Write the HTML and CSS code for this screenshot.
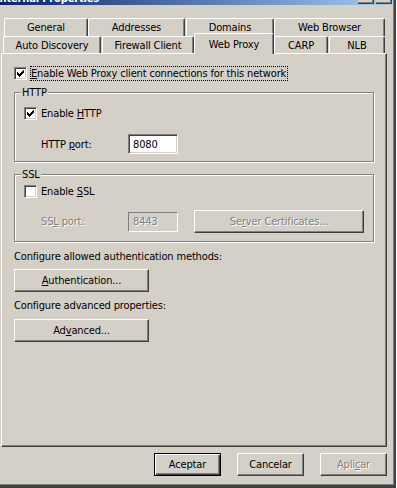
FILE: index.html
```html
<!DOCTYPE html>
<html lang="en">
<head>
  <meta charset="UTF-8" />
  <title>Internal Properties</title>
  <link rel="stylesheet" href="styles.css">
</head>
<body>
  <div class="window">
    <div class="titlebar">
      <div class="title">Internal Properties</div>
      <div class="title-btns">
        <span class="title-btn">?</span>
        <span class="title-btn">x</span>
      </div>
    </div>

    <div class="tabs">
      <div class="tab-row back">
        <div class="tab" style="width:84px">General</div>
        <div class="tab" style="width:97px">Addresses</div>
        <div class="tab gap" style="width:88px">Domains</div>
        <div class="tab" style="width:111px">Web Browser</div>
      </div>
      <div class="tab-row front">
        <div class="tab" style="width:98px">Auto Discovery</div>
        <div class="tab gap" style="width:92px">Firewall Client</div>
        <div class="tab selected" style="width:80px">Web Proxy</div>
        <div class="tab" style="width:54px">CARP</div>
        <div class="tab gap" style="width:56px">NLB</div>
      </div>
    </div>

    <div class="panel">
      <div class="check-row">
        <span class="check on"><svg width="7" height="7" viewBox="0 0 7 7"><path d="M6 0h1v1h-1zM5 1h2v1h-2zM0 2h1v1h-1zM4 2h3v1h-3zM0 3h2v1h-2zM3 3h3v1h-3zM0 4h5v1h-5zM1 5h3v1h-3zM2 6h1v1h-1z" fill="#000"/></svg></span>
        <span class="check-label focus"><u>E</u>nable Web Proxy client connections for this network</span>
      </div>

      <fieldset class="group http">
        <legend>HTTP</legend>
        <div class="check-row">
          <span class="check on"><svg width="7" height="7" viewBox="0 0 7 7"><path d="M6 0h1v1h-1zM5 1h2v1h-2zM0 2h1v1h-1zM4 2h3v1h-3zM0 3h2v1h-2zM3 3h3v1h-3zM0 4h5v1h-5zM1 5h3v1h-3zM2 6h1v1h-1z" fill="#000"/></svg></span>
          <span class="check-label">Enable <u>H</u>TTP</span>
        </div>
        <div class="field-row port-row">
          <span class="field-label">HTTP <u>p</u>ort:</span>
          <span class="input">8080</span>
        </div>
      </fieldset>

      <fieldset class="group ssl">
        <legend>SSL</legend>
        <div class="check-row">
          <span class="check"></span>
          <span class="check-label">Enable <u>S</u>SL</span>
        </div>
        <div class="field-row ssl-row">
          <span class="field-label disabled">SS<u>L</u> port:</span>
          <span class="input disabled">8443</span>
          <span class="btn disabled cert-btn">Se<u>r</u>ver Certificates...</span>
        </div>
      </fieldset>

      <div class="caption">Configure allowed authentication methods:</div>
      <div class="btn wide"><u>A</u>uthentication...</div>
      <div class="caption second">Configure advanced properties:</div>
      <div class="btn wide">Ad<u>v</u>anced...</div>
    </div>

    <div class="footer">
      <div class="btn default">Aceptar</div>
      <div class="btn">Cancelar</div>
      <div class="btn disabled">Apli<u>c</u>ar</div>
    </div>
  </div>
</body>
</html>
```

FILE: styles.css
```css
body {
  margin: 0;
  background: #fff;
  font-family: 'DejaVu Sans Condensed', 'DejaVu Sans', sans-serif;
  font-size: 11px;
  line-height: 13px;
  letter-spacing: -0.15px;
  color: #000;
  overflow: hidden;
}
u {
  text-underline-offset: 1px;
}
.window {
  width: 394px;
  height: 485px;
  background: #d4d0c8;
  border-right: 2px solid #404040;
  border-bottom: 3px solid #404040;
  box-shadow: inset -1px -1px 0 #808080;
}
.titlebar {
  height: 5px;
  overflow: hidden;
  display: flex;
  justify-content: space-between;
  background: linear-gradient(to right, #0a246a, #a6caf0);
  margin-right: 1px;
}
.title {
  color: #fff;
  font-weight: bold;
  margin-top: -8px;
  margin-left: -4px;
}
.title-btns {
  display: flex;
  gap: 2px;
  margin-top: -12px;
  margin-right: 1px;
}
.title-btn {
  width: 15px;
  height: 15px;
  background: #d4d0c8;
  border-right: 1px solid #404040;
  border-bottom: 1px solid #404040;
  box-shadow: inset -1px -1px 0 #808080;
  font-weight: bold;
  text-align: center;
  line-height: 15px;
}
.tabs {
  margin-top: 13px;
}
.tab-row {
  display: flex;
  align-items: flex-end;
}
.tab-row.back {
  height: 18px;
  padding-left: 4px;
}
.tab-row.front {
  height: 17px;
  padding-left: 3px;
}
.tab {
  box-sizing: border-box;
  height: 100%;
  background: #d4d0c8;
  border-top: 1px solid #fff;
  border-left: 1px solid #fff;
  border-right: 1px solid #404040;
  border-radius: 2px 2px 0 0;
  box-shadow: inset -1px 0 0 #808080;
  display: flex;
  align-items: center;
  justify-content: center;
  white-space: nowrap;
}
.tab.gap {
  margin-left: 1px;
}
.tab-row.back .tab {
  align-items: flex-start;
  padding-top: 2px;
}
.tab-row.front .tab {
  padding-top: 1px;
}
.tab.selected {
  position: relative;
  z-index: 1;
  height: 21px;
  margin-bottom: -1px;
  padding-top: 0;
  padding-bottom: 1px;
}
.panel {
  box-sizing: border-box;
  width: 386px;
  height: 394px;
  margin-left: 1px;
  padding: 12px 12px 0 12px;
  border-top: 1px solid #fff;
  border-left: 1px solid #fff;
  border-right: 1px solid #404040;
  border-bottom: 1px solid #404040;
  box-shadow: inset -1px -1px 0 #808080;
}
.check-row {
  display: flex;
  align-items: center;
  height: 15px;
}
.check {
  box-sizing: border-box;
  width: 13px;
  height: 13px;
  flex: none;
  background: #fff;
  border: 1px solid;
  border-color: #808080 #fff #fff #808080;
  box-shadow: inset 1px 1px 0 #404040, inset -1px -1px 0 #d4d0c8;
  display: flex;
  align-items: center;
  justify-content: center;
}
.check svg {
  display: block;
}
.check-label {
  margin-left: 3px;
  border: 1px dotted transparent;
  padding-right: 1px;
  white-space: nowrap;
}
.check-label.focus {
  border-color: #000;
}
.group {
  margin: 5px 0 0 0;
  padding: 7px 9px 7px 9px;
  border: 1px solid #808080;
  box-shadow: inset 1px 1px 0 #fff, 1px 1px 0 #fff;
}
.group legend {
  margin-left: -3px;
  padding: 0 1px;
  background: #d4d0c8;
}
.group.ssl {
  margin-top: 6px;
  padding-top: 3px;
  padding-bottom: 8px;
}
.field-row {
  display: flex;
  align-items: center;
}
.port-row {
  height: 20px;
  margin-top: 13px;
}
.ssl-row {
  height: 23px;
  margin-top: 11px;
}
.field-label {
  width: 87px;
  margin-left: 17px;
}
.input {
  box-sizing: border-box;
  width: 50px;
  height: 20px;
  padding-left: 4px;
  background: #fff;
  border: 1px solid;
  border-color: #808080 #fff #fff #808080;
  box-shadow: inset 1px 1px 0 #404040, inset -1px -1px 0 #d4d0c8;
  display: flex;
  align-items: center;
}
.input.disabled {
  background: #d4d0c8;
  box-shadow: none;
}
.disabled {
  color: #808080;
  text-shadow: 1px 1px 0 #fff;
}
.btn {
  box-sizing: border-box;
  width: 67px;
  height: 23px;
  border: 1px solid;
  border-color: #fff #404040 #404040 #fff;
  box-shadow: inset -1px -1px 0 #808080;
  display: flex;
  align-items: center;
  justify-content: center;
  white-space: nowrap;
}
.btn.default {
  border-color: #000;
  box-shadow: inset 1px 1px 0 #fff, inset -1px -1px 0 #404040, inset -2px -2px 0 #808080;
}
.cert-btn {
  width: 170px;
  margin-left: 16px;
}
.btn.wide {
  width: 135px;
  margin-top: 6px;
}
.caption {
  margin-top: 8px;
}
.caption.second {
  margin-top: 7px;
}
.caption.second + .btn.wide {
  margin-top: 7px;
}
.footer {
  display: flex;
  justify-content: flex-end;
  gap: 16px;
  margin-top: 6px;
  padding-right: 7px;
}
```
